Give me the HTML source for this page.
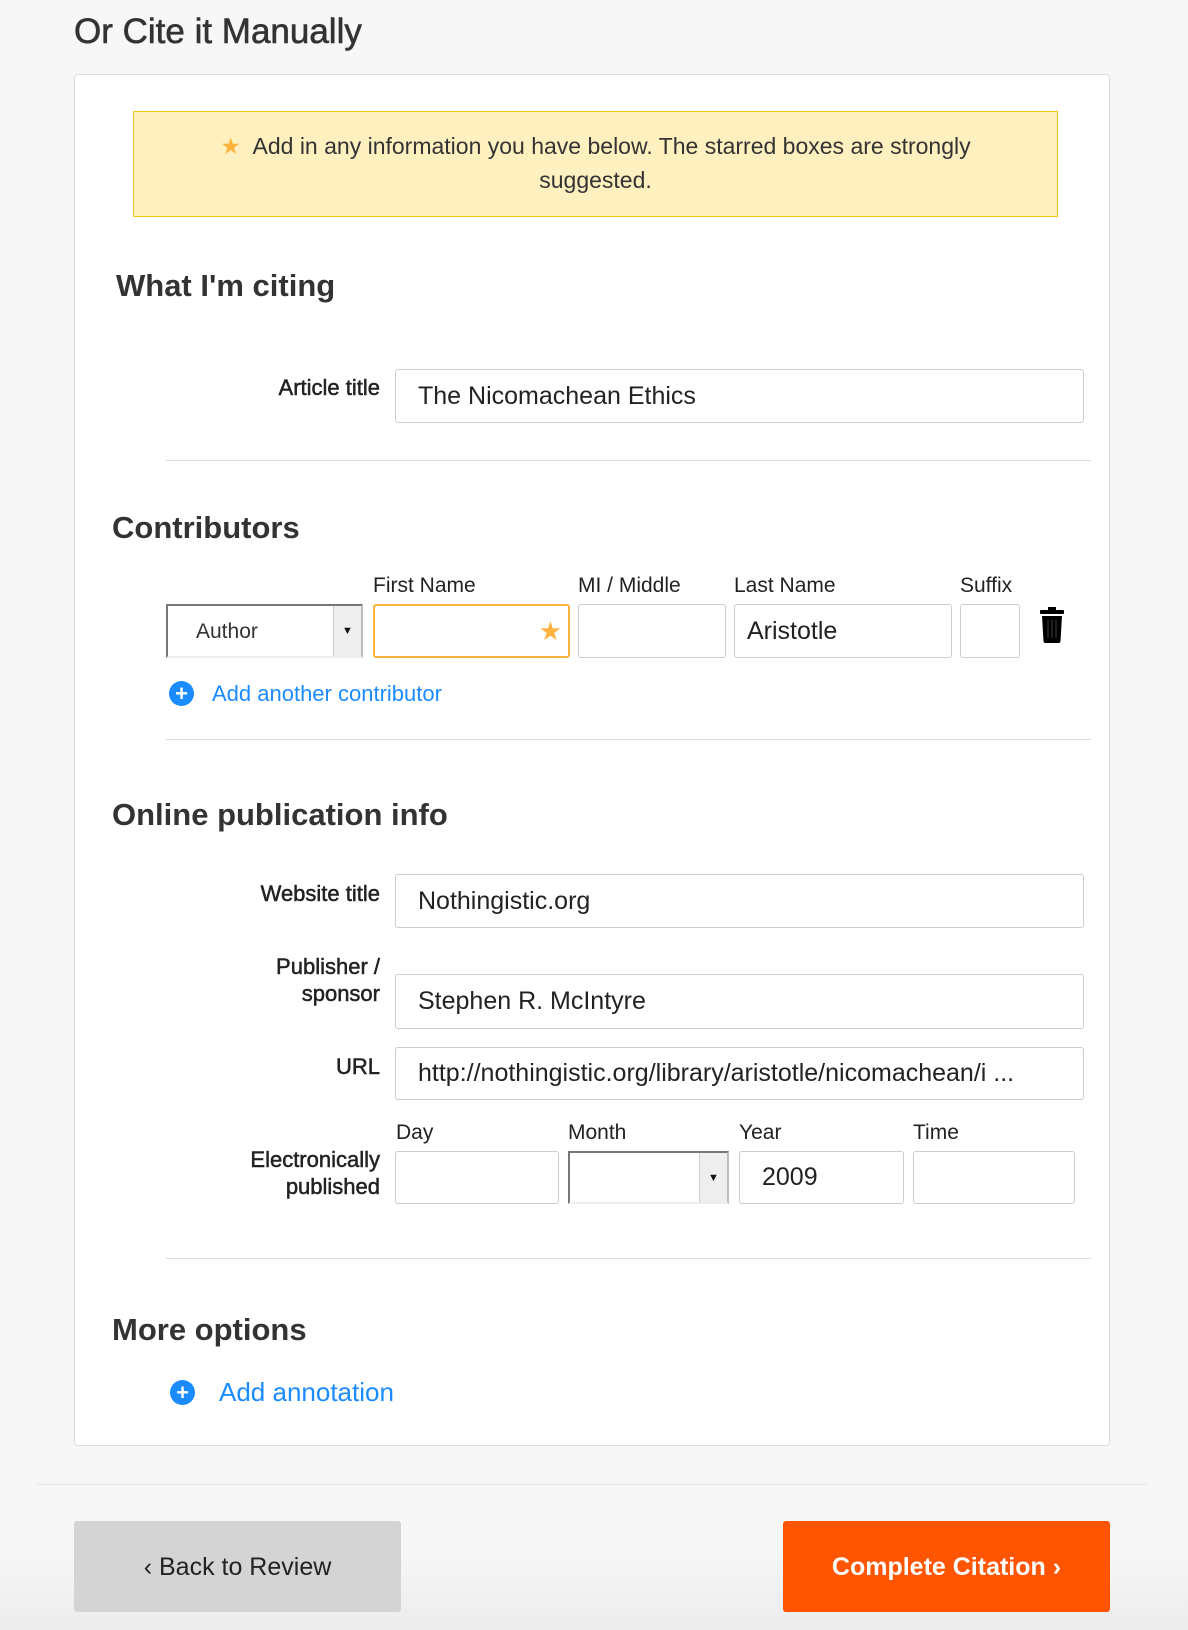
<!DOCTYPE html>
<html><head><meta charset="utf-8"><style>
*{box-sizing:border-box;margin:0;padding:0}
body{width:1188px;height:1630px;background:linear-gradient(#f7f7f7 0,#f7f7f7 1550px,#ececec 1630px);font-family:"Liberation Sans",sans-serif;color:#333;position:relative;overflow:hidden}
.a{position:absolute}
h1{position:absolute;left:74px;top:12px;font-size:35px;font-weight:normal;color:#333;-webkit-text-stroke:0.6px #333}
.card{left:74px;top:74px;width:1036px;height:1372px;background:#fff;border:1px solid #ddd;border-radius:4px}
.note{left:133px;top:111px;width:925px;height:106px;background:#fff0bf;border:1px solid #f5c518;text-align:center;font-size:23px;line-height:34px;padding-top:17px;color:#333}
.h2{font-size:31px;font-weight:bold;color:#333}
.lbl{font-size:22px;color:#222;text-align:right;width:300px;line-height:27px;-webkit-text-stroke:0.5px #222}
.inp{border:1px solid #ccc;border-radius:3px;background:#fff;font-size:25px;padding-left:22px;display:flex;align-items:center;color:#222}
.hr{height:1px;background:#ddd;left:166px;width:925px}
.sl{font-size:21px;color:#222}
.plus{width:25px;height:25px;border-radius:50%;background:#1b8cff;color:#fff;text-align:center;font-weight:bold}
.link{color:#1b8cff}
.sel{border:2px solid #777;border-right-color:#bbb;border-bottom-color:#eee;background:#fff;font-size:21px}
.arrow{position:absolute;right:0;top:0;bottom:0;width:28px;background:#eee;border-left:1px solid #ccc;font-size:11px;display:flex;align-items:center;justify-content:center;color:#111}
.btn{top:1521px;height:91px;width:327px;border-radius:3px;font-size:25px;display:flex;align-items:center;justify-content:center;padding-top:2px}
</style></head><body>
<h1>Or Cite it Manually</h1>
<div class="a card"></div>
<div class="a note"><span style="color:#ffb23e">★</span>&nbsp; Add in any information you have below. The starred boxes are strongly<br>suggested.</div>
<div class="a h2" style="left:116px;top:268px">What I'm citing</div>
<div class="a lbl" style="left:80px;top:374px">Article title</div>
<div class="a inp" style="left:395px;top:369px;width:689px;height:54px">The Nicomachean Ethics</div>
<div class="a hr" style="top:460px"></div>
<div class="a h2" style="left:112px;top:510px">Contributors</div>
<div class="a sl" style="left:373px;top:574px">First Name</div>
<div class="a sl" style="left:578px;top:574px">MI / Middle</div>
<div class="a sl" style="left:734px;top:574px">Last Name</div>
<div class="a sl" style="left:960px;top:574px">Suffix</div>
<div class="a sel" style="left:166px;top:604px;width:197px;height:54px;padding:14px 0 0 28px">Author<div class="arrow">▼</div></div>
<div class="a inp" style="left:373px;top:604px;width:197px;height:54px;border:2px solid #ffb23e;justify-content:flex-end;padding-right:6px;color:#ffb23e;font-size:26px">★</div>
<div class="a inp" style="left:578px;top:604px;width:148px;height:54px"></div>
<div class="a inp" style="left:734px;top:604px;width:218px;height:54px;padding-left:12px">Aristotle</div>
<div class="a inp" style="left:960px;top:604px;width:60px;height:54px"></div>
<svg class="a" style="left:1040px;top:607px" width="24" height="36" viewBox="0 0 24 36"><rect x="0" y="3" width="24" height="4" rx="1"/><rect x="8" y="0" width="8" height="4"/><path d="M2 9h20l-1.5 25a2 2 0 0 1-2 2h-13a2 2 0 0 1-2-2z"/><path d="M8 13v18M12 13v18M16 13v18" stroke="#fff" stroke-width="1" opacity=".25"/></svg>
<div class="a plus" style="left:169px;top:681px;font-size:22px;line-height:25px">+</div>
<div class="a link" style="left:212px;top:681px;font-size:22px">Add another contributor</div>
<div class="a hr" style="top:739px"></div>
<div class="a h2" style="left:112px;top:797px">Online publication info</div>
<div class="a lbl" style="left:80px;top:880px">Website title</div>
<div class="a inp" style="left:395px;top:874px;width:689px;height:54px">Nothingistic.org</div>
<div class="a lbl" style="left:80px;top:953px">Publisher /<br>sponsor</div>
<div class="a inp" style="left:395px;top:974px;width:689px;height:55px">Stephen R. McIntyre</div>
<div class="a lbl" style="left:80px;top:1053px">URL</div>
<div class="a inp" style="left:395px;top:1047px;width:689px;height:53px">http://nothingistic.org/library/aristotle/nicomachean/i ...</div>
<div class="a sl" style="left:396px;top:1121px">Day</div>
<div class="a sl" style="left:568px;top:1121px">Month</div>
<div class="a sl" style="left:739px;top:1121px">Year</div>
<div class="a sl" style="left:913px;top:1121px">Time</div>
<div class="a lbl" style="left:80px;top:1146px">Electronically<br>published</div>
<div class="a inp" style="left:395px;top:1151px;width:164px;height:53px"></div>
<div class="a sel" style="left:568px;top:1151px;width:161px;height:53px"><div class="arrow">▼</div></div>
<div class="a inp" style="left:739px;top:1151px;width:165px;height:53px">2009</div>
<div class="a inp" style="left:913px;top:1151px;width:162px;height:53px"></div>
<div class="a hr" style="top:1258px"></div>
<div class="a h2" style="left:112px;top:1312px">More options</div>
<div class="a plus" style="left:170px;top:1380px;font-size:22px;line-height:25px">+</div>
<div class="a link" style="left:219px;top:1377px;font-size:26px">Add annotation</div>
<div class="a" style="left:37px;top:1484px;width:1111px;height:1px;background:#e8e8e8"></div>
<div class="a btn" style="left:74px;background:#d4d4d4;color:#222">‹ Back to Review</div>
<div class="a btn" style="left:783px;background:#ff5500;color:#fff;font-weight:bold">Complete Citation ›</div>
</body></html>
